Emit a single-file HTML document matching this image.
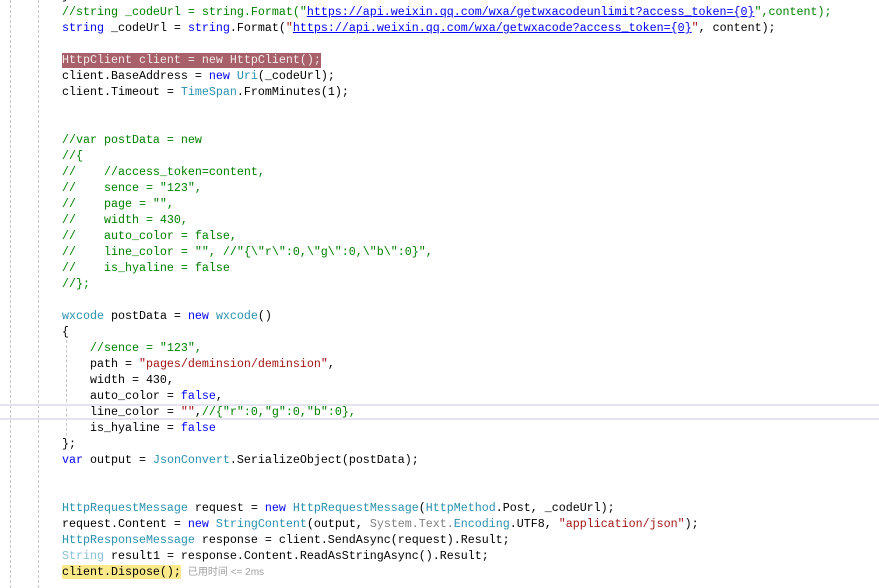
<!DOCTYPE html>
<html><head><meta charset="utf-8"><style>
html,body{margin:0;padding:0;background:#fff;width:879px;height:588px;overflow:hidden;position:relative}
.l{position:absolute;left:62px;height:16px;line-height:16px;white-space:pre;font-family:"Liberation Mono","Noto Sans CJK SC",monospace;font-size:11.67px;color:#000}
.k{color:#0000ff}.t{color:#2b91af}.s{color:#a31515}.c{color:#008000}.g{color:#808080}.u{color:#0000ff;text-decoration:underline}.ft{color:#8ac2d4}
.dash{position:absolute;top:0;height:588px;border-left:1px dashed #c8c8c8}
</style></head><body>
<div class="dash" style="left:10px"></div>
<div class="dash" style="left:38px"></div>
<div style="position:absolute;left:66px;top:340px;height:96px;border-left:1px dashed #c8c8c8"></div>
<div style="position:absolute;left:0;top:404px;width:879px;height:16px;border-top:2px solid #e4e4ee;border-bottom:2px solid #e4e4ee;box-sizing:border-box"></div>
<div class="l" style="top:-12px">}</div>
<div class="l c" style="top:4px">//string _codeUrl = string.Format("<span class="u">https://api.weixin.qq.com/wxa/getwxacodeunlimit?access_token={0}</span>",content);</div>
<div class="l" style="top:20px"><span class="k">string</span> _codeUrl = <span class="k">string</span>.Format(<span class="s">"</span><span class="u">https://api.weixin.qq.com/wxa/getwxacode?access_token={0}</span><span class="s">"</span>, content);</div>
<div class="l" style="top:52px"><span style="background:#a8606a;color:#f4eaea;padding-bottom:1px">HttpClient client = new HttpClient();</span></div>
<div class="l" style="top:68px">client.BaseAddress = <span class="k">new</span> <span class="t">Uri</span>(_codeUrl);</div>
<div class="l" style="top:84px">client.Timeout = <span class="t">TimeSpan</span>.FromMinutes(1);</div>
<div class="l c" style="top:132px">//var postData = new</div>
<div class="l c" style="top:148px">//{</div>
<div class="l c" style="top:164px">//    //access_token=content,</div>
<div class="l c" style="top:180px">//    sence = "123",</div>
<div class="l c" style="top:196px">//    page = "",</div>
<div class="l c" style="top:212px">//    width = 430,</div>
<div class="l c" style="top:228px">//    auto_color = false,</div>
<div class="l c" style="top:244px">//    line_color = "", //"{\"r\":0,\"g\":0,\"b\":0}",</div>
<div class="l c" style="top:260px">//    is_hyaline = false</div>
<div class="l c" style="top:276px">//};</div>
<div class="l" style="top:308px"><span class="t">wxcode</span> postData = <span class="k">new</span> <span class="t">wxcode</span>()</div>
<div class="l" style="top:324px">{</div>
<div class="l c" style="top:340px">    //sence = "123",</div>
<div class="l" style="top:356px">    path = <span class="s">"pages/deminsion/deminsion"</span>,</div>
<div class="l" style="top:372px">    width = 430,</div>
<div class="l" style="top:388px">    auto_color = <span class="k">false</span>,</div>
<div class="l" style="top:404px">    line_color = <span class="s">""</span>,<span class="c">//{"r":0,"g":0,"b":0},</span></div>
<div class="l" style="top:420px">    is_hyaline = <span class="k">false</span></div>
<div class="l" style="top:436px">};</div>
<div class="l" style="top:452px"><span class="k">var</span> output = <span class="t">JsonConvert</span>.SerializeObject(postData);</div>
<div class="l" style="top:500px"><span class="t">HttpRequestMessage</span> request = <span class="k">new</span> <span class="t">HttpRequestMessage</span>(<span class="t">HttpMethod</span>.Post, _codeUrl);</div>
<div class="l" style="top:516px">request.Content = <span class="k">new</span> <span class="t">StringContent</span>(output, <span class="g">System.Text.</span><span class="t">Encoding</span>.UTF8, <span class="s">"application/json"</span>);</div>
<div class="l" style="top:532px"><span class="t">HttpResponseMessage</span> response = client.SendAsync(request).Result;</div>
<div class="l" style="top:548px"><span class="ft">String</span> result1 = response.Content.ReadAsStringAsync().Result;</div>
<div class="l" style="top:564px"><span style="background:#fbe98a">client.Dispose();</span> <span style="font-family:'Liberation Sans','Noto Sans CJK SC',sans-serif;font-size:10px;color:#a0a0a0">已用时间 &lt;= 2ms</span></div>
</body></html>
